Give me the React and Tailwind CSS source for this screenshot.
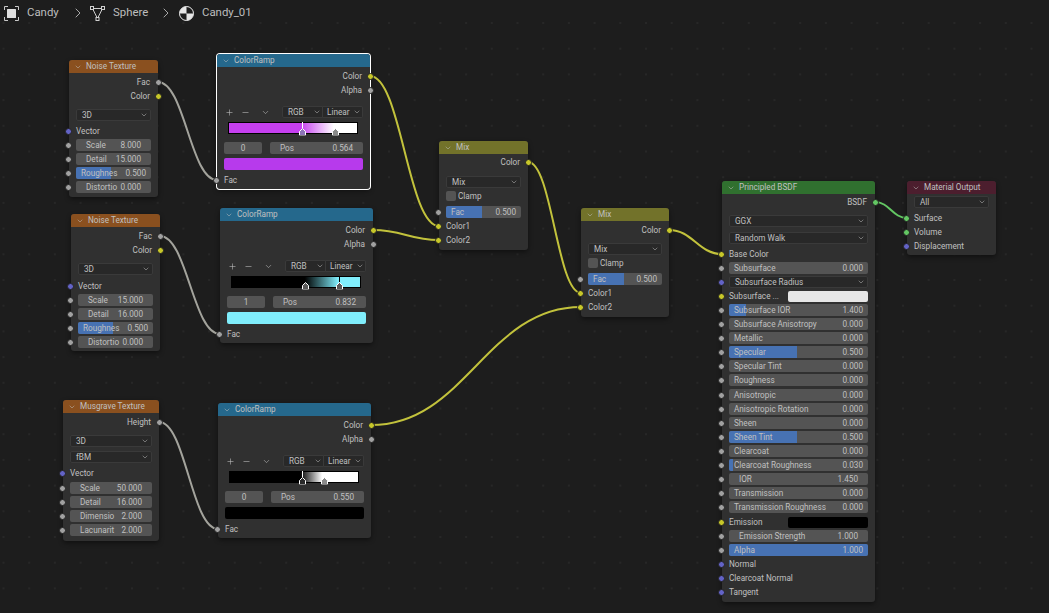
import React from 'react';
import { ChevronDown, ChevronRight, Plus, Minus } from 'lucide-react';

const GRAY = 'bg-[#a1a1a1]';
const YELLOW = 'bg-[#c7c729]';
const PURPLE = 'bg-[#6363c7]';
const GREEN = 'bg-[#63c763]';

const wires = [
    { from: [158, 82], to: [217, 180], color: '#a3a39c' },
    { from: [160, 236], to: [220, 334], color: '#a3a39c' },
    { from: [159, 422], to: [218, 529], color: '#a3a39c' },
    { from: [370, 76], to: [439, 226], color: '#c2c23c' },
    { from: [373, 230], to: [439, 240], color: '#c2c23c' },
    { from: [528, 162], to: [581, 293], color: '#c2c23c' },
    { from: [371, 425], to: [581, 307], color: '#c2c23c' },
    { from: [669, 230], to: [722, 254], color: '#c2c23c' },
    { from: [875, 202], to: [907, 218], color: '#63c763' },
];

function wirePath({ from, to }) {
    const dx = (to[0] - from[0]) * 0.45;
    return `M${from[0]} ${from[1]} C${from[0] + dx} ${from[1]} ${to[0] - dx} ${to[1]} ${to[0]} ${to[1]}`;
}

function Socket({ color, side = 'left' }) {
    return (
        <span className={`absolute top-[3.5px] w-[7px] h-[7px] rounded-full border border-[#222] ${color} ${side === 'left' ? 'left-[-4px]' : 'right-[-4px]'}`} />
    );
}

function Output({ label, color }) {
    return (
        <div className="relative h-[14px] px-[8px] flex items-center justify-end">
            <span>{label}</span>
            <Socket color={color} side="right" />
        </div>
    );
}

function Input({ label, color }) {
    return (
        <div className="relative h-[14px] px-[7px] flex items-center">
            <span className="whitespace-nowrap">{label}</span>
            {color && <Socket color={color} />}
        </div>
    );
}

function Select({ label, socket, className = '' }) {
    return (
        <div className={`relative h-[14px] px-[7px] flex items-center ${className}`}>
            <div className="flex-1 h-[12px] flex items-center justify-between pl-[5px] pr-[2px] rounded-[2px] bg-[#282828] border border-[#3a3a3a]">
                <span>{label}</span>
                <ChevronDown size={8} strokeWidth={1.5} />
            </div>
            {socket && <Socket color={socket} />}
        </div>
    );
}

// number field, with a blue fill when it is a slider
function Field({ label, value, fill, slider, socket = GRAY, className = '' }) {
    return (
        <div className={`relative h-[14px] px-[7px] flex items-center ${className}`}>
            <div className={`relative flex-1 h-[12px] flex items-center justify-between rounded-[2px] bg-[#545454] overflow-hidden ${slider ? 'px-[5px]' : 'pl-[10px] pr-[10px]'}`}>
                {fill && <span className={`absolute left-0 top-0 bottom-0 bg-[#4772b3] ${fill}`} />}
                <span className="relative whitespace-nowrap">{label}</span>
                <span className="relative">{value}</span>
            </div>
            <Socket color={socket} />
        </div>
    );
}

function Swatch({ label, color, socket }) {
    return (
        <div className="relative h-[14px] px-[7px] flex items-center justify-between">
            <span>{label}</span>
            <span className={`w-[80px] h-[11px] rounded-[2px] ${color}`} />
            <Socket color={socket} />
        </div>
    );
}

function Clamp() {
    return (
        <div className="h-[14px] px-[7px] flex items-center gap-[2px]">
            <span className="w-[10px] h-[10px] rounded-[2px] bg-[#545454]" />
            <span>Clamp</span>
        </div>
    );
}

function Node({ title, header, className, selected, children }) {
    return (
        <div className={`absolute rounded-[3px] bg-[#303030] text-[#c0c0c0] shadow-[0_2px_5px_rgba(0,0,0,0.45)] ${selected ? 'ring-1 ring-white' : ''} ${className}`}>
            <div className={`h-[13px] pl-[5px] flex items-center gap-[4px] rounded-t-[3px] ${header}`}>
                <ChevronDown size={8} strokeWidth={1.5} />
                <span className="whitespace-nowrap">{title}</span>
            </div>
            {children}
        </div>
    );
}

function Stop({ className, fill = '#5a5a5a' }) {
    return (
        <svg className={`absolute bottom-[-2px] ${className}`} width="7" height="8" viewBox="0 0 7 8">
            <path d="M3.5 0.5 L6.5 3.5 V7.5 H0.5 V3.5 Z" fill={fill} stroke="#fff" strokeWidth="1" />
            <path d="M0 8 H7" stroke="#000" strokeWidth="1" />
        </svg>
    );
}

function RampBody({ gradient, stops, index, pos, swatch, dashed }) {
    return (
        <>
            <div className="pt-[2px]">
                <Output label="Color" color={YELLOW} />
                <Output label="Alpha" color={GRAY} />
            </div>
            <div className="mt-[8px] h-[14px] px-[7px] flex items-center">
                <Plus size={9} strokeWidth={1.5} className="ml-[1px]" />
                <Minus size={9} strokeWidth={1.5} className="ml-[7px]" />
                <ChevronDown size={9} strokeWidth={1.5} className="ml-[11px]" />
                <div className="ml-auto flex">
                    <div className="w-[41px] h-[12px] flex items-center justify-between pl-[5px] pr-[1px] rounded-l-[2px] bg-[#282828] border border-[#3a3a3a]">
                        <span>RGB</span>
                        <ChevronDown size={8} strokeWidth={1.5} />
                    </div>
                    <div className="w-[40px] h-[12px] flex items-center justify-between pl-[4px] pr-[1px] rounded-r-[2px] bg-[#282828] border border-l-0 border-[#3a3a3a]">
                        <span>Linear</span>
                        <ChevronDown size={8} strokeWidth={1.5} />
                    </div>
                </div>
            </div>
            <div className="mt-[3px] mx-[11px] mr-[12px] relative h-[12px]">
                <div className={`h-full border border-black ${gradient}`} />
                {stops}
                <span className={`absolute top-0 h-[6px] border-l border-dashed ${dashed}`} />
            </div>
            <div className="mt-[8px] px-[7px] h-[12px] flex gap-[8px]">
                <div className="w-[38px] flex items-center justify-center rounded-[2px] bg-[#545454]">{index}</div>
                <div className="flex-1 flex items-center justify-between pl-[10px] pr-[10px] rounded-[2px] bg-[#545454]">
                    <span>Pos</span>
                    <span>{pos}</span>
                </div>
            </div>
            <div className="mt-[4px] mx-[7px] h-[12px] rounded-[2px]"><div className={`h-full rounded-[2px] ${swatch}`} /></div>
            <div className="mt-[3px] pb-[2px]"><Input label="Fac" color={GRAY} /></div>
        </>
    );
}

function MixBody({ pt, gap }) {
    return (
        <div className={`${pt} pb-[3px]`}>
            <Output label="Color" color={YELLOW} />
            <Select label="Mix" className={gap} />
            <Clamp />
            <Field label="Fac" value="0.500" slider fill="w-[48%]" className="mt-[2px]" />
            <Input label="Color1" color={YELLOW} />
            <Input label="Color2" color={YELLOW} />
        </div>
    );
}

function NoiseBody({ scale, detail, vectorGap, pb }) {
    return (
        <div className={`pt-[2px] ${pb}`}>
            <Output label="Fac" color={GRAY} />
            <Output label="Color" color={YELLOW} />
            <Select label="3D" className="mt-[5px]" />
            <div className={vectorGap}><Input label="Vector" color={PURPLE} /></div>
            <Field label="Scale" value={scale} />
            <Field label="Detail" value={detail} />
            <Field label="Roughnes" value="0.500" slider fill="w-[47%]" />
            <Field label="Distortio" value="0.000" />
        </div>
    );
}

function ObjectIcon() {
    return (
        <svg width="15" height="15" viewBox="0 0 15 15" fill="none" stroke="#c8c8c8" strokeWidth="1">
            <path d="M0.5 4V0.5H4M11 0.5H14.5V4M14.5 11V14.5H11M4 14.5H0.5V11" />
            <rect x="3" y="3" width="9" height="9" rx="0.5" fill="#e0e0e0" stroke="none" />
        </svg>
    );
}

function MeshIcon() {
    return (
        <svg width="15" height="15" viewBox="0 0 15 15" fill="none" stroke="#cfcfcf" strokeWidth="1">
            <path d="M2.5 2.5H12.5L7.5 12.5Z" />
            <rect x="0.5" y="0.5" width="3" height="3" fill="#1d1d1d" />
            <rect x="11.5" y="0.5" width="3" height="3" fill="#1d1d1d" />
            <rect x="6" y="11.5" width="3" height="3" fill="#1d1d1d" />
        </svg>
    );
}

function MaterialIcon() {
    return (
        <svg width="15" height="15" viewBox="0 0 15 15">
            <circle cx="7.5" cy="7.5" r="7" fill="#e6e6e6" />
            <path d="M7.5 0.5A7 7 0 0 1 14.5 7.5H7.5Z" fill="#1d1d1d" />
            <path d="M7.5 7.5H0.5A7 7 0 0 0 7.5 14.5Z" fill="#1d1d1d" />
            <circle cx="7.5" cy="7.5" r="7" fill="none" stroke="#e6e6e6" strokeWidth="1" />
        </svg>
    );
}

export default function App() {
    return (
        <div className="relative w-[1049px] h-[613px] overflow-hidden bg-[#1d1d1d] text-[8.2px] leading-none font-['Roboto',sans-serif]">
            <svg className="absolute inset-0" width="1049" height="613">
                <defs>
                    <pattern id="dots" width="25.7" height="25.7" patternUnits="userSpaceOnUse" patternTransform="translate(2.5 22)">
                        <rect width="2" height="2" fill="#272727" />
                    </pattern>
                </defs>
                <rect width="1049" height="613" fill="url(#dots)" />
                {wires.map((w, i) => (
                    <path key={i} d={wirePath(w)} fill="none" stroke={w.color} strokeWidth="2" strokeLinecap="round" />
                ))}
            </svg>

            <div className="absolute left-[4px] top-[5px] flex items-center text-[11.4px] text-[#bebebe]">
                <ObjectIcon />
                <span className="ml-[8px] w-[43px]">Candy</span>
                <ChevronRight size={16} strokeWidth={1.3} />
                <span className="ml-[4px]"><MeshIcon /></span>
                <span className="ml-[8px] w-[45px]">Sphere</span>
                <ChevronRight size={16} strokeWidth={1.3} />
                <span className="ml-[5px]"><MaterialIcon /></span>
                <span className="ml-[8px]">Candy_01</span>
            </div>

            <Node title="Noise Texture" header="bg-[#8a501f]" className="left-[69px] top-[60px] w-[89px]">
                <NoiseBody scale="8.000" detail="15.000" vectorGap="mt-[2px]" pb="pb-[3px]" />
            </Node>
            <Node title="Noise Texture" header="bg-[#8a501f]" className="left-[71px] top-[214px] w-[89px]">
                <NoiseBody scale="15.000" detail="16.000" vectorGap="mt-[3px]" pb="pb-[2px]" />
            </Node>
            <Node title="Musgrave Texture" header="bg-[#8a501f]" className="left-[63px] top-[400px] w-[96px]">
                <div className="pt-[2px] pb-[4px]">
                    <Output label="Height" color={GRAY} />
                    <Select label="3D" className="mt-[5px]" />
                    <Select label="fBM" className="mt-[2px]" />
                    <div className="mt-[2px]"><Input label="Vector" color={PURPLE} /></div>
                    <Field label="Scale" value="50.000" className="mt-[1px]" />
                    <Field label="Detail" value="16.000" />
                    <Field label="Dimensio" value="2.000" />
                    <Field label="Lacunarit" value="2.000" />
                </div>
            </Node>

            <Node title="ColorRamp" header="bg-[#25688c]" selected className="left-[217px] top-[54px] w-[153px]">
                <RampBody
                    gradient="bg-[linear-gradient(90deg,#c63ff0_56%,#ffffff_82%)]"
                    stops={<><Stop fill="#8d74b8" className="left-[71px]" /><Stop fill="#8a8a8a" className="left-[104px]" /></>}
                    dashed="left-[74px] border-white"
                    index="0"
                    pos="0.564"
                    swatch="bg-[#b73aec]"
                />
            </Node>
            <Node title="ColorRamp" header="bg-[#25688c]" className="left-[220px] top-[208px] w-[153px]">
                <RampBody
                    gradient="bg-[linear-gradient(90deg,#000000_57%,#80eefc_83%)]"
                    stops={<><Stop className="left-[71px]" /><Stop className="left-[105px]" /></>}
                    dashed="left-[108px] border-black"
                    index="1"
                    pos="0.832"
                    swatch="bg-[#80eefc]"
                />
            </Node>
            <Node title="ColorRamp" header="bg-[#25688c]" className="left-[218px] top-[403px] w-[153px]">
                <RampBody
                    gradient="bg-[linear-gradient(90deg,#000000_55%,#ffffff_72%)]"
                    stops={<><Stop fill="#2a2a2a" className="left-[70px]" /><Stop fill="#8a8a8a" className="left-[92px]" /></>}
                    dashed="left-[73px] border-white"
                    index="0"
                    pos="0.550"
                    swatch="bg-black"
                />
            </Node>

            <Node title="Mix" header="bg-[#72722a]" className="left-[439px] top-[141px] w-[89px]">
                <MixBody pt="pt-[1px]" gap="mt-[6px]" />
            </Node>
            <Node title="Mix" header="bg-[#72722a]" className="left-[581px] top-[208px] w-[88px]">
                <MixBody pt="pt-[2px]" gap="mt-[5px]" />
            </Node>

            <Node title="Principled BSDF" header="bg-[#30702f]" className="left-[722px] top-[181px] w-[153px]">
                <div className="pt-[1px] pb-[3px]">
                    <Output label="BSDF" color={GREEN} />
                    <Select label="GGX" className="mt-[5px]" />
                    <Select label="Random Walk" className="mt-[3px]" />
                    <div className="mt-[2px]"><Input label="Base Color" color={YELLOW} /></div>
                    <Field label="Subsurface" value="0.000" slider />
                    <Select label="Subsurface Radius" socket={PURPLE} />
                    <Swatch label="Subsurface ..." color="bg-[#e6e6e6]" socket={YELLOW} />
                    <Field label="Subsurface IOR" value="1.400" slider fill="w-[12%]" />
                    <Field label="Subsurface Anisotropy" value="0.000" slider />
                    <Field label="Metallic" value="0.000" slider />
                    <Field label="Specular" value="0.500" slider fill="w-[49%]" />
                    <Field label="Specular Tint" value="0.000" slider />
                    <Field label="Roughness" value="0.000" slider />
                    <Field label="Anisotropic" value="0.000" slider className="mt-[1px]" />
                    <Field label="Anisotropic Rotation" value="0.000" slider />
                    <Field label="Sheen" value="0.000" slider />
                    <Field label="Sheen Tint" value="0.500" slider fill="w-[49%]" />
                    <Field label="Clearcoat" value="0.000" slider />
                    <Field label="Clearcoat Roughness" value="0.030" slider fill="w-[3%]" />
                    <Field label="IOR" value="1.450" />
                    <Field label="Transmission" value="0.000" slider />
                    <Field label="Transmission Roughness" value="0.000" slider />
                    <div className="mt-[1px]"><Swatch label="Emission" color="bg-black" socket={YELLOW} /></div>
                    <Field label="Emission Strength" value="1.000" />
                    <Field label="Alpha" value="1.000" slider fill="w-full" />
                    <Input label="Normal" color={PURPLE} />
                    <Input label="Clearcoat Normal" color={PURPLE} />
                    <Input label="Tangent" color={PURPLE} />
                </div>
            </Node>

            <Node title="Material Output" header="bg-[#4c1e2e]" className="left-[907px] top-[181px] w-[89px]">
                <div className="pt-[1px] pb-[2px]">
                    <Select label="All" />
                    <div className="mt-[2px]"><Input label="Surface" color={GREEN} /></div>
                    <Input label="Volume" color={GREEN} />
                    <Input label="Displacement" color={PURPLE} />
                </div>
            </Node>
        </div>
    );
}
